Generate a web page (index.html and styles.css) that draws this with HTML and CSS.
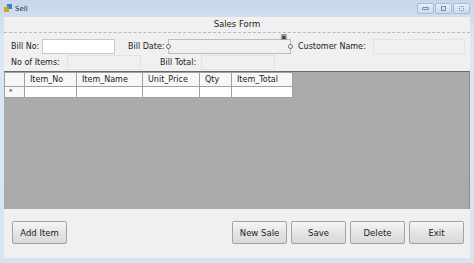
FILE: index.html
```html
<!DOCTYPE html>
<html lang="en">
  <head>
    <meta charset="UTF-8" />
    <title>Sell</title>
    <link rel="stylesheet" href="styles.css">
  </head>
  <body>
    <div class="window">
      <div class="titlebar">
        <div class="title">
          <svg class="app-icon" width="9" height="9" viewBox="0 0 9 9">
            <rect x="0" y="3" width="5" height="5" fill="#d9a21b"/>
            <rect x="3" y="0" width="5" height="5" fill="#3d7fd1"/>
            <rect x="3" y="3" width="2" height="2" fill="#7bb33a"/>
          </svg>
          <span>Sell</span>
        </div>
        <div class="controls">
          <span class="ctrl"><i class="min"></i></span>
          <span class="ctrl"><i class="max"></i></span>
          <span class="ctrl"><i class="cls"></i></span>
        </div>
      </div>
      <div class="client">
        <div class="form-title">Sales Form</div>
        <div class="panel">
          <div class="row">
            <span class="lbl w-billno">Bill No:</span>
            <span class="box w-72"></span>
            <span class="lbl w-billdate">Bill Date:</span>
            <span class="datepick">
              <i class="handle h-left"></i>
              <i class="handle h-right"></i>
              <i class="glyph">&#9635;</i>
            </span>
            <span class="lbl w-cust">Customer Name:</span>
            <span class="box faint w-91"></span>
          </div>
          <div class="row row2">
            <span class="lbl w-items">No of Items:</span>
            <span class="box faint w-73"></span>
            <span class="lbl w-total">Bill Total:</span>
            <span class="box faint w-73"></span>
          </div>
        </div>
        <div class="grid">
          <table class="items">
            <thead>
              <tr>
                <th class="rowhead"></th>
                <th class="c1">Item_No</th>
                <th class="c2">Item_Name</th>
                <th class="c3">Unit_Price</th>
                <th class="c4">Qty</th>
                <th class="c5">Item_Total</th>
              </tr>
            </thead>
            <tbody>
              <tr>
                <td class="rowhead">*</td>
                <td></td>
                <td></td>
                <td></td>
                <td></td>
                <td></td>
              </tr>
            </tbody>
          </table>
        </div>
        <div class="actions">
          <button class="btn">Add Item</button>
          <div class="right-btns">
            <button class="btn">New Sale</button>
            <button class="btn">Save</button>
            <button class="btn">Delete</button>
            <button class="btn">Exit</button>
          </div>
        </div>
      </div>
    </div>
  </body>
</html>
```

FILE: styles.css
```css
body {
  margin: 0;
  font-family: "DejaVu Sans", sans-serif;
  font-size: 8px;
  color: #222;
}
.window {
  width: 474px;
  height: 263px;
  background: linear-gradient(#c6d7ec, #dbe7f5 40px, #d6e3f2);
  display: flex;
  flex-direction: column;
}
.titlebar {
  height: 17px;
  display: flex;
  justify-content: space-between;
  align-items: center;
}
.title {
  display: flex;
  align-items: center;
  padding-left: 4px;
  font-size: 7px;
  color: #333;
}
.app-icon {
  margin-right: 2px;
}
.controls {
  display: flex;
  gap: 1px;
  padding-right: 4px;
}
.ctrl {
  width: 15px;
  height: 9px;
  border: 1px solid #a9bcd4;
  border-radius: 2px;
  background: linear-gradient(#e6eef8, #ccdbed);
  display: flex;
  justify-content: center;
  align-items: center;
}
.ctrl i {
  display: block;
  border: 1px solid #7d8fa6;
}
.ctrl .min {
  width: 5px;
  height: 1px;
  border-radius: 1px;
}
.ctrl .max {
  width: 3px;
  height: 3px;
}
.ctrl .cls {
  width: 3px;
  height: 3px;
  border-style: dotted;
}
.client {
  flex: 1;
  margin: 0 4px 5px 4px;
  background: #f0f0f0;
  display: flex;
  flex-direction: column;
}
.form-title {
  height: 14px;
  text-align: center;
  line-height: 12px;
  padding-top: 1px;
  font-size: 8.5px;
}
.panel {
  border-top: 1px dashed #b8b8b8;
  height: 38px;
  display: flex;
  flex-direction: column;
}
.row {
  display: flex;
  align-items: center;
  height: 18px;
  padding-top: 4px;
  padding-left: 7px;
}
.row2 {
  height: 14px;
  padding-top: 0;
}
.lbl {
  white-space: nowrap;
}
.w-billno { width: 31px; }
.w-billdate { width: 40px; margin-left: 13px; }
.w-cust { width: 75px; margin-left: 7px; }
.w-items { width: 56px; }
.w-total { width: 41px; margin-left: 19px; }
.box {
  height: 13px;
  background: #fff;
  border: 1px solid #c8c8c8;
}
.box.faint {
  background: #f0f0f0;
  border-color: #e2e2e2;
}
.w-72 { width: 71px; }
.w-73 { width: 72px; }
.w-91 { width: 90px; }
.datepick {
  position: relative;
  width: 121px;
  height: 13px;
  border: 1px solid #bdbdbd;
  background: #f0f0f0;
}
.handle {
  position: absolute;
  top: 4px;
  width: 3px;
  height: 3px;
  border: 1px solid #666;
  border-radius: 50%;
  background: #fff;
}
.h-left { left: -3px; }
.h-right { right: -3px; }
.glyph {
  position: absolute;
  top: -7px;
  right: 3px;
  font-style: normal;
  font-size: 7px;
  color: #444;
}
.grid {
  height: 137px;
  background: #ababab;
  border-top: 1px solid #696969;
  border-right: 1px solid #8a8a8a;
}
.items {
  border-collapse: collapse;
  table-layout: fixed;
}
.items th,
.items td {
  border: 1px solid #a0a0a0;
  padding: 0;
  font-weight: normal;
}
.items th {
  height: 13px;
  background: #f7f7f7;
  text-align: left;
  padding-left: 5px;
  font-size: 8px;
  color: #222;
}
.items td {
  height: 10px;
  background: #fff;
}
.items .rowhead {
  width: 19px;
  padding: 0;
  background: #f7f7f7;
  text-align: left;
  text-indent: 4px;
  font-size: 7px;
  line-height: 8px;
}
.items .c1 { width: 46px; }
.items .c2 { width: 60px; }
.items .c3 { width: 51px; }
.items .c4 { width: 26px; }
.items .c5 { width: 55px; }
.actions {
  flex: 1;
  display: flex;
  justify-content: space-between;
  align-items: flex-start;
  padding: 12px 6px 0 8px;
}
.right-btns {
  display: flex;
  gap: 4px;
}
.btn {
  width: 55px;
  height: 23px;
  border: 1px solid #a3a3a3;
  border-radius: 2px;
  background: linear-gradient(#f6f6f6, #e3e3e3 55%, #d9d9d9);
  font-family: "DejaVu Sans", sans-serif;
  font-size: 8.5px;
  color: #222;
  padding: 0;
}
```
